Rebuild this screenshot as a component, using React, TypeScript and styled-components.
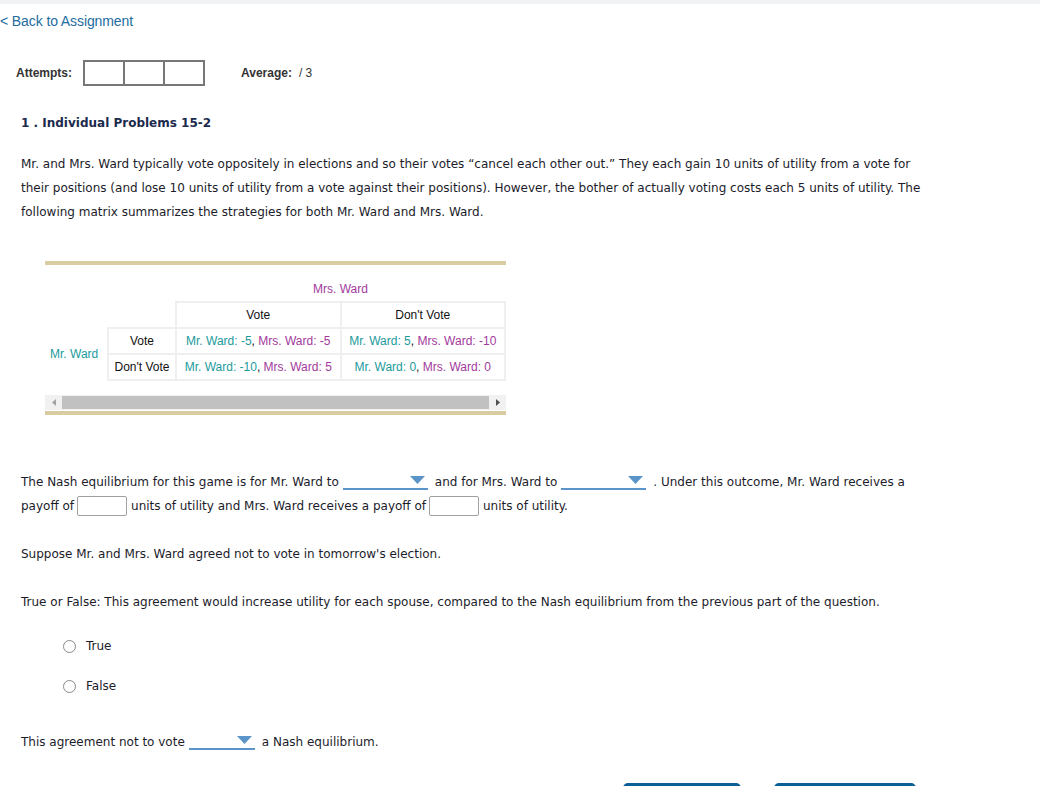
import React from 'react';
import styled, { createGlobalStyle } from 'styled-components';

const GlobalStyle = createGlobalStyle`
  html, body {
    margin: 0;
    padding: 0;
    background: #fff;
  }
  body {
    font-family: "DejaVu Sans", Verdana, sans-serif;
    color: #1c1c2b;
  }
`;

const TEAL = '#1b9a9c';
const PURPLE = '#a23a9c';

const Page = styled.div`
  width: 1040px;
  height: 786px;
  overflow: hidden;
  border-top: 4px solid #f1f2f4;
  box-sizing: border-box;
`;

const BackLink = styled.a`
  display: block;
  font-family: "Liberation Sans", Arial, sans-serif;
  font-size: 14px;
  line-height: 16px;
  color: #1e6c9e;
  text-decoration: none;
  margin-top: 9px;
  letter-spacing: -0.1px;
`;

const AttemptsRow = styled.div`
  display: flex;
  align-items: center;
  margin-top: 31px;
  padding-left: 16px;
  font-family: "Liberation Sans", Arial, sans-serif;
  font-size: 12px;
  color: #333;
`;

const Label = styled.span`
  font-weight: bold;
  margin-right: ${(p: { gap: number }) => p.gap}px;
`;

const Boxes = styled.div`
  display: flex;
  border: 2px solid #777;
  margin-left: 11px;
  margin-right: 36px;
`;

const Box = styled.div`
  width: 38px;
  height: 22px;
  & + & {
    border-left: 2px solid #777;
  }
`;

const Content = styled.div`
  padding-left: 21px;
  width: 920px;
`;

const Heading = styled.h2`
  margin: 29px 0 0 0;
  font-size: 12px;
  line-height: 16px;
  font-weight: bold;
  color: #1b2a4d;
`;

const Para = styled.p`
  margin: ${(p: { top: number }) => p.top}px 0 0 0;
  font-size: 12px;
  line-height: 24px;
`;

const Figure = styled.div`
  margin: 37px 0 0 24px;
  width: 461px;
  border-top: 4px solid #d9cca2;
  border-bottom: 4px solid #d9cca2;
  font-family: "Liberation Sans", Arial, sans-serif;
  font-size: 12px;
`;

const Matrix = styled.table`
  border-collapse: collapse;
  margin-top: 14px;
  margin-bottom: 14px;
  width: 461px;
`;

const Caption = styled.td`
  color: ${PURPLE};
  text-align: center;
  height: 20px;
  padding: 0 0 2px 0;
`;

const Cell = styled.td`
  border: 2px solid #efefef;
  height: 24px;
  padding: 0 4px;
  text-align: center;
  color: #111;
  white-space: nowrap;
`;

const PlayerCell = styled.td`
  color: ${TEAL};
  padding: 0 0 0 5px;
  white-space: nowrap;
  width: 57px;
`;

const Mr = styled.span`
  color: ${TEAL};
`;

const Mrs = styled.span`
  color: ${PURPLE};
`;

const Scrollbar = styled.div`
  display: flex;
  align-items: center;
  height: 15px;
  background: #f1f1f1;
  margin-bottom: 1px;
`;

const Arrow = styled.div`
  width: 17px;
  display: flex;
  justify-content: center;
`;

const Thumb = styled.div`
  flex: 1;
  height: 13px;
  background: #c1c1c1;
`;

const Dropdown = styled.span`
  display: inline-flex;
  justify-content: flex-end;
  align-items: center;
  vertical-align: middle;
  box-sizing: border-box;
  width: ${(p: { w: number }) => p.w}px;
  height: 18px;
  border-bottom: 2px solid #5a94c8;
  margin: 0 7px 0 4px;
  padding-right: 3px;
  position: relative;
  top: -2px;
`;

const Caret = () => (
  <svg width="15" height="8" viewBox="0 0 15 8">
    <polygon points="0,0 15,0 7.5,8" fill="#5a94c8" />
  </svg>
);

const Blank = styled.span`
  display: inline-block;
  vertical-align: middle;
  width: 48px;
  height: 18px;
  border: 1px solid #a0a0a0;
  border-radius: 2px;
  margin: 0 4px 0 3px;
  position: relative;
  top: -1px;
`;

const Options = styled.div`
  margin: 23px 0 0 42px;
  display: flex;
  flex-direction: column;
  gap: 22px;
`;

const Option = styled.label`
  display: flex;
  align-items: center;
  font-size: 12px;
  line-height: 18px;
`;

const Radio = styled.span`
  width: 11px;
  height: 11px;
  border: 1px solid #8a8a8a;
  border-radius: 50%;
  margin-right: 10px;
`;

const Buttons = styled.div`
  display: flex;
  gap: 33px;
  margin: 29px 0 0 623px;
`;

const Button = styled.div`
  width: ${(p: { w: number }) => p.w}px;
  height: 34px;
  border-radius: 5px;
  background: #0c5f95;
`;

const Payoff = ({ a, b }: { a: string; b: string }) => (
  <>
    <Mr>Mr. Ward: {a}</Mr>, <Mrs>Mrs. Ward: {b}</Mrs>
  </>
);

export default function App() {
  return (
    <Page>
      <GlobalStyle />
      <BackLink href="#">&lt; Back to Assignment</BackLink>
      <AttemptsRow>
        <Label gap={0}>Attempts:</Label>
        <Boxes>
          <Box />
          <Box />
          <Box />
        </Boxes>
        <Label gap={7}>Average:</Label>
        <span>/ 3</span>
      </AttemptsRow>
      <Content>
        <Heading>1 . Individual Problems 15-2</Heading>
        <Para top={21}>
          Mr. and Mrs. Ward typically vote oppositely in elections and so their votes “cancel each
          other out.” They each gain 10 units of utility from a vote for their positions (and lose 10
          units of utility from a vote against their positions). However, the bother of actually voting
          costs each 5 units of utility. The following matrix summarizes the strategies for both Mr.
          Ward and Mrs. Ward.
        </Para>
        <Figure>
          <Matrix>
            <tbody>
              <tr>
                <td />
                <td />
                <Caption colSpan={2}>Mrs. Ward</Caption>
              </tr>
              <tr>
                <td />
                <td />
                <Cell>Vote</Cell>
                <Cell>Don't Vote</Cell>
              </tr>
              <tr>
                <PlayerCell rowSpan={2}>Mr. Ward</PlayerCell>
                <Cell>Vote</Cell>
                <Cell>
                  <Payoff a="-5" b="-5" />
                </Cell>
                <Cell>
                  <Payoff a="5" b="-10" />
                </Cell>
              </tr>
              <tr>
                <Cell>Don't Vote</Cell>
                <Cell>
                  <Payoff a="-10" b="5" />
                </Cell>
                <Cell>
                  <Payoff a="0" b="0" />
                </Cell>
              </tr>
            </tbody>
          </Matrix>
          <Scrollbar>
            <Arrow>
              <svg width="4" height="7" viewBox="0 0 4 7">
                <polygon points="4,0 4,7 0,3.5" fill="#a3a3a3" />
              </svg>
            </Arrow>
            <Thumb />
            <Arrow>
              <svg width="4" height="7" viewBox="0 0 4 7">
                <polygon points="0,0 0,7 4,3.5" fill="#505050" />
              </svg>
            </Arrow>
          </Scrollbar>
        </Figure>
        <Para top={55}>
          The Nash equilibrium for this game is for Mr. Ward to
          <Dropdown w={85}>
            <Caret />
          </Dropdown>
          and for Mrs. Ward to
          <Dropdown w={85}>
            <Caret />
          </Dropdown>
          . Under this outcome, Mr. Ward receives a payoff of
          <Blank />
          units of utility and Mrs. Ward receives a payoff of
          <Blank />
          units of utility.
        </Para>
        <Para top={24}>Suppose Mr. and Mrs. Ward agreed not to vote in tomorrow's election.</Para>
        <Para top={24}>
          True or False: This agreement would increase utility for each spouse, compared to the Nash
          equilibrium from the previous part of the question.
        </Para>
        <Options>
          <Option>
            <Radio />
            True
          </Option>
          <Option>
            <Radio />
            False
          </Option>
        </Options>
        <Para top={35}>
          This agreement not to vote
          <Dropdown w={66}>
            <Caret />
          </Dropdown>
          a Nash equilibrium.
        </Para>
      </Content>
      <Buttons>
        <Button w={118} />
        <Button w={142} />
      </Buttons>
    </Page>
  );
}
